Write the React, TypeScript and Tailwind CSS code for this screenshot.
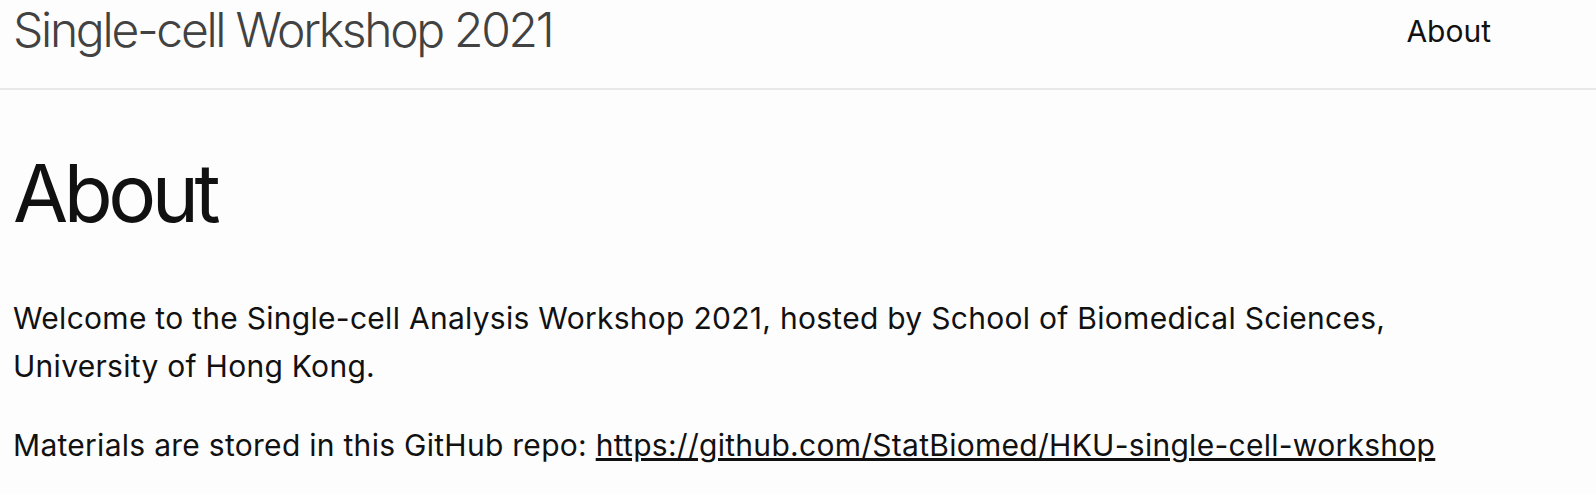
import React from "react";

export default function App() {
  return (
    <div className="min-h-screen bg-[#fdfdfd] text-[#111] font-['Inter',sans-serif]">
      <header className="border-b-2 border-[#e8e8e8]">
        <div className="h-[88px] max-w-[1491px] pl-[13px] flex items-start justify-between">
          <a className="text-[48px] leading-[60px] font-light tracking-[-2.3px] text-[#424242]" href="#">
            Single-cell Workshop 2021
          </a>
          <nav className="mt-[7px]">
            <a className="text-[30px] leading-[48px] text-[#111]" href="#">
              About
            </a>
          </nav>
        </div>
      </header>

      <main className="max-w-[1491px] pl-[13px]">
        <h1 className="mt-[55px] text-[80px] leading-[96px] tracking-[-4.5px]">About</h1>
        <p className="mt-[53px] text-[30px] leading-[48px] tracking-[0.28px]">
          Welcome to the Single-cell Analysis Workshop 2021, hosted by School of Biomedical Sciences,
          University of Hong Kong.
        </p>
        <p className="mt-[31px] text-[30px] leading-[48px] tracking-[0.28px]">
          Materials are stored in this GitHub repo:{" "}
          <a className="underline" href="#">
            https://github.com/StatBiomed/HKU-single-cell-workshop
          </a>
        </p>
      </main>
    </div>
  );
}
